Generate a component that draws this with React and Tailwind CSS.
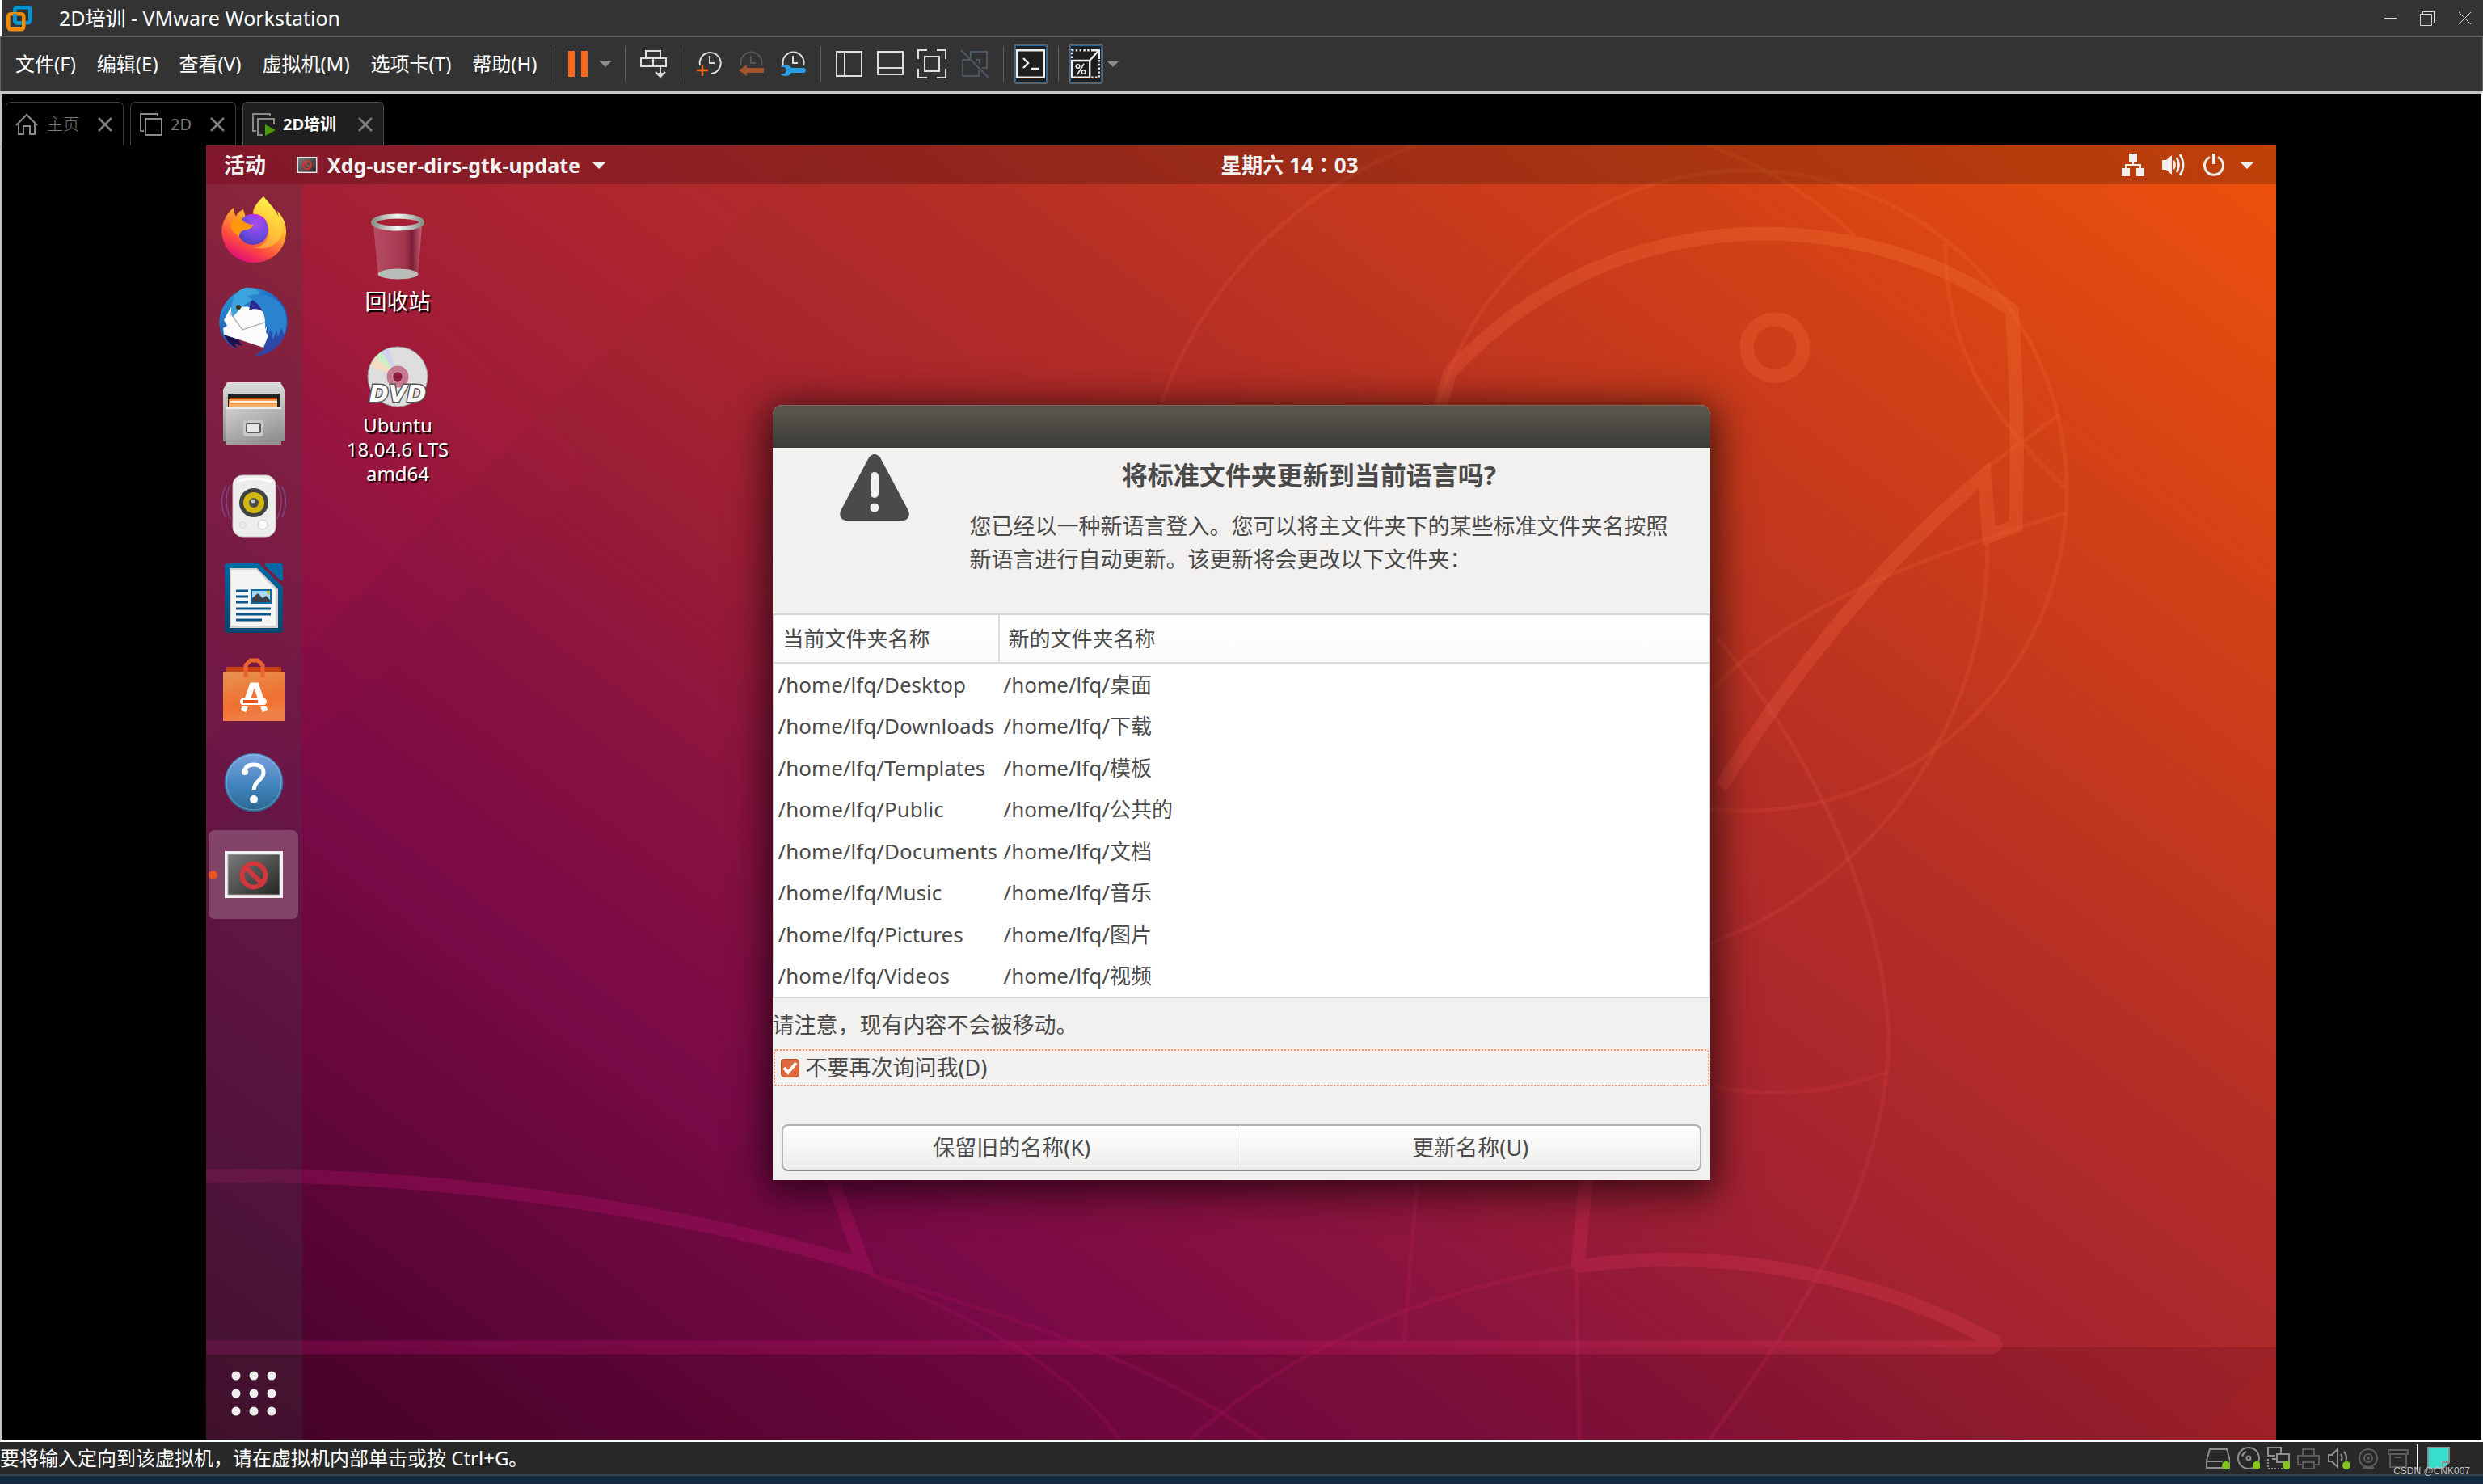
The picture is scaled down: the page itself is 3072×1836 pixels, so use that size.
import React, { useState } from "react";

const MENUS = ["文件(F)", "编辑(E)", "查看(V)", "虚拟机(M)", "选项卡(T)", "帮助(H)"];

const FOLDERS = [
  ["/home/lfq/Desktop", "/home/lfq/桌面"],
  ["/home/lfq/Downloads", "/home/lfq/下载"],
  ["/home/lfq/Templates", "/home/lfq/模板"],
  ["/home/lfq/Public", "/home/lfq/公共的"],
  ["/home/lfq/Documents", "/home/lfq/文档"],
  ["/home/lfq/Music", "/home/lfq/音乐"],
  ["/home/lfq/Pictures", "/home/lfq/图片"],
  ["/home/lfq/Videos", "/home/lfq/视频"],
];

/* ---------- VMware window chrome ---------- */

const VMwareLogo = () => (
  <svg className="w-8 h-8" viewBox="0 0 32 32" fill="none" strokeWidth="4.6">
    <rect x="10.3" y="2.3" width="19" height="19" rx="3" stroke="#0095d3" />
    <rect x="2.3" y="10.3" width="19" height="19" rx="3" stroke="#f38b00" />
    <path d="M10.3 10v8.500a3 3 0 0 0 3 3h5" stroke="#0095d3" />
  </svg>
);

const TitleBar = () => (
  <header className="flex items-center h-[45px] bg-[#333333] border-l-2 border-white pl-[6px] pr-3">
    <VMwareLogo />
    <h1 className="ml-[33px] text-[25px] text-white whitespace-nowrap">
      2D培训 - VMware Workstation
    </h1>
    <div className="flex items-center gap-[26px] ml-auto text-[#d8d8d8]">
      <button aria-label="最小化">
        <svg className="w-5 h-5" viewBox="0 0 20 20" stroke="currentColor">
          <path d="M2 9.500h15" />
        </svg>
      </button>
      <button aria-label="还原">
        <svg className="w-5 h-5" viewBox="0 0 20 20" fill="none" stroke="currentColor">
          <path d="M.5 4.500h14v14H.5zM3.500 4V1.500h14v14H15" />
        </svg>
      </button>
      <button aria-label="关闭">
        <svg className="w-5 h-5" viewBox="0 0 20 20" stroke="currentColor">
          <path d="M2 2l15 15M17 2L2 17" />
        </svg>
      </button>
    </div>
  </header>
);

const Divider = () => <span className="w-px h-11 bg-[#5f5f5f]" />;

const Caret = () => (
  <svg className="w-4 h-2" viewBox="0 0 16 8" fill="#8c8c8c">
    <path d="M0 0h16L8 8z" />
  </svg>
);

const ToolButton = ({ label, children }) => (
  <button aria-label={label} className="flex items-center">
    {children}
  </button>
);

const ClockFace = ({ color }) => (
  <g fill="none" stroke={color} strokeWidth="2">
    <path d="M6 20A13 13 0 1 1 31 20" />
    <path d="M18 8v9h6" />
  </g>
);

const Toolbar = () => (
  <div className="flex items-center h-[67px] bg-[#333333] border border-b-0 border-[#5f5f5f] pl-[18px]">
    <nav className="flex gap-[26px]">
      {MENUS.map((menu) => (
        <button key={menu} className="text-2xl text-white whitespace-nowrap">
          {menu}
        </button>
      ))}
    </nav>

    <div className="flex items-center ml-[15px]">
      <Divider />
      <div className="flex items-center gap-[14px] pl-[22px] pr-4">
        <ToolButton label="挂起">
          <svg className="w-6 h-8" viewBox="0 0 24 32" fill="#ff661a">
            <path d="M0 0h8v32H0zM16 0h8v32h-8z" />
          </svg>
        </ToolButton>
        <ToolButton label="电源选项">
          <Caret />
        </ToolButton>
      </div>
      <Divider />
      <div className="px-[17px]">
        <ToolButton label="发送 Ctrl+Alt+Del">
          <svg className="w-[34px] h-9" viewBox="0 0 34 36" fill="none" stroke="#dedede" strokeWidth="2">
            <path d="M8 11V2h18v9M2 11h31v10H2zM17 11v10M26 21v12M20 28l6 6 6-6" />
            <path d="M21 29h10l-5 5z" fill="#dedede" stroke="none" />
          </svg>
        </ToolButton>
      </div>
      <Divider />
      <div className="flex items-center gap-4 px-4">
        <ToolButton label="拍摄快照">
          <svg className="w-9 h-9" viewBox="0 0 36 36">
            <path d="M7 20A13 13 0 1 1 21 30" fill="none" stroke="#dedede" strokeWidth="2" />
            <path d="M19 8v9h6" fill="none" stroke="#dedede" strokeWidth="2" />
            <path d="M10 19v14M3 26h14" stroke="#ff661a" strokeWidth="2.400" />
          </svg>
        </ToolButton>
        <ToolButton label="恢复快照">
          <svg className="w-9 h-9" viewBox="0 0 36 36">
            <ClockFace color="#555555" />
            <path d="M3 26l10-7v4h21v6H13v4z" fill="#a3532a" />
          </svg>
        </ToolButton>
        <ToolButton label="管理快照">
          <svg className="w-9 h-9" viewBox="0 0 36 36">
            <ClockFace color="#dedede" />
            <path
              d="M4 20c5-2 11 0 12 3h15a3 3 0 0 1 0 6H16c-1 4-7 5-12 3l-1-2h5l2-4-2-4H3z"
              fill="#2b9fe3"
            />
          </svg>
        </ToolButton>
      </div>
      <Divider />
      <div className="flex items-center gap-[17px] px-[17px]">
        <ToolButton label="显示库">
          <svg className="w-[34px] h-9" viewBox="0 0 34 36" fill="none" stroke="#dedede" strokeWidth="2">
            <path d="M2 3h31v30H2zM12 3v30" />
          </svg>
        </ToolButton>
        <ToolButton label="显示缩略图">
          <svg className="w-[34px] h-9" viewBox="0 0 34 36" fill="none" stroke="#dedede" strokeWidth="2">
            <path d="M2 3h31v28H2zM2 23h31" />
          </svg>
        </ToolButton>
        <ToolButton label="全屏">
          <svg className="w-9 h-9" viewBox="0 0 36 36" fill="none" stroke="#dedede" strokeWidth="2">
            <path d="M1 12V1h11M24 1h11v11M35 24v11H24M12 35H1V24M9 9h18v18H9z" />
          </svg>
        </ToolButton>
        <ToolButton label="Unity 模式">
          <svg className="w-9 h-9" viewBox="0 0 36 36" fill="none" stroke="#4a5965" strokeWidth="2">
            <path d="M13 11V3h20v20h-6M12 13H3v20h20v-7M20 13h4v5M1 1l34 34" />
          </svg>
        </ToolButton>
      </div>
      <Divider />
      <div className="px-3">
        <ToolButton label="控制台">
          <span className="grid place-items-center w-[43px] h-[50px] rounded border-2 border-[#5e6468] bg-[#1f1f1f] ring-1 ring-inset ring-[#1c6cb0]">
            <svg className="w-9 h-9" viewBox="0 0 36 36" fill="none" stroke="#eeeeee" strokeWidth="2.400">
              <path d="M1.200 1.200h33.600v33.600H1.200z" />
              <path d="M9 11l6 6-6 6M18 24h10" />
            </svg>
          </span>
        </ToolButton>
      </div>
      <Divider />
      <div className="flex items-center gap-1 pl-3">
        <ToolButton label="拉伸客户机">
          <span className="grid place-items-center w-[43px] h-[50px] rounded border-2 border-[#5e6468] bg-[#1f1f1f] ring-1 ring-inset ring-[#1c6cb0]">
            <svg className="w-9 h-9" viewBox="0 0 36 36" fill="none" stroke="#eeeeee" strokeWidth="2.400">
              <path d="M1.200 14h22v20.800h-22zM23 14L34 2M25 1.200h9.800V12" />
              <path d="M1.200 11V1.200H24M34.800 13v21.600H24" strokeDasharray="2.400 2.400" />
              <g strokeWidth="1.600">
                <path d="M16 18L8 31" />
                <circle cx="8.500" cy="21" r="2.300" />
                <circle cx="15.500" cy="28" r="2.300" />
              </g>
            </svg>
          </span>
        </ToolButton>
        <ToolButton label="拉伸选项">
          <Caret />
        </ToolButton>
      </div>
    </div>
  </div>
);

const CloseTab = ({ label }) => (
  <button aria-label={`关闭 ${label}`}>
    <svg className="w-[18px] h-[18px]" viewBox="0 0 18 18" stroke="#7c7c7c" strokeWidth="2.600">
      <path d="M1 1l16 16M17 1L1 17" />
    </svg>
  </button>
);

const TabStrip = () => (
  <div className="flex items-end gap-2 h-16 pl-[5px] text-xl">
    <div className="flex items-center h-[54px] w-[146px] pl-[11px] pr-[13px] rounded-t-md border border-b-0 border-[#3a3a3a] text-[#777777]">
      <svg className="w-7 h-7" viewBox="0 0 28 28" fill="none" stroke="#8a8a8a" strokeWidth="2">
        <path d="M1 15L14 2l13 13M4 13v13h6v-10h8v10h6V13" />
      </svg>
      <span className="ml-[11px] font-light whitespace-nowrap">主页</span>
      <span className="flex ml-auto">
        <CloseTab label="主页" />
      </span>
    </div>
    <div className="flex items-center h-[54px] w-[131px] pl-[11px] pr-[13px] rounded-t-md border border-b-0 border-[#3a3a3a] text-[#777777]">
      <svg className="w-7 h-7" viewBox="0 0 28 28" fill="none" stroke="#8a8a8a" strokeWidth="2">
        <path d="M5 22H1V1h21v3M7 7h20v20H7z" />
      </svg>
      <span className="ml-[10px]">2D</span>
      <span className="flex ml-auto">
        <CloseTab label="2D" />
      </span>
    </div>
    <div className="flex items-center h-[54px] w-[175px] pl-[11px] pr-[13px] rounded-t-md border border-b-0 border-[#4a4a4a] bg-[#1f1f1f] text-white">
      <svg className="w-7 h-7" viewBox="0 0 28 28" fill="none" stroke="#8a8a8a" strokeWidth="2">
        <path d="M5 22H1V1h21v3M13 27H7V7h20v7" />
        <path d="M16 14l13 7-13 7z" fill="#4e9a06" stroke="none" />
      </svg>
      <span className="ml-[10px] font-bold whitespace-nowrap">2D培训</span>
      <span className="flex ml-auto">
        <CloseTab label="2D培训" />
      </span>
    </div>
  </div>
);

/* ---------- Ubuntu desktop ---------- */

const Wallpaper = () => (
  <svg
    className="absolute inset-0 w-full h-full"
    viewBox="0 0 2561 1601"
    preserveAspectRatio="none"
    fill="none"
    aria-hidden="true"
  >
    <defs>
      <linearGradient id="sky" x1="0" y1="1" x2="1.073" y2="0.086">
        <stop offset="0" stopColor="#420328" />
        <stop offset="0.12" stopColor="#5c0538" />
        <stop offset="0.26" stopColor="#7a0a47" />
        <stop offset="0.38" stopColor="#8c143e" />
        <stop offset="0.5" stopColor="#a42330" />
        <stop offset="0.65" stopColor="#b62f24" />
        <stop offset="0.82" stopColor="#d04017" />
        <stop offset="1" stopColor="#ef510b" />
      </linearGradient>
      {/* same slope as the sky, in canvas units so every line shares it */}
      <linearGradient id="outline" x1="0" y1="1601" x2="1660" y2="-661" gradientUnits="userSpaceOnUse">
        <stop offset="0.05" stopColor="#a00c62" />
        <stop offset="0.3" stopColor="#b8125e" />
        <stop offset="0.5" stopColor="#d43648" />
        <stop offset="0.7" stopColor="#e8583a" />
        <stop offset="1" stopColor="#f57a25" />
      </linearGradient>
    </defs>
    <path d="M0 0h2561v1601H0z" fill="url(#sky)" />

    {/* paper folds */}
    <path d="M0 742L754 0H0z" fill="#ff2050" fillOpacity="0.06" />
    <path d="M100 30L480 400 0 860V0z" fill="#ff2060" fillOpacity="0.03" />
    <path d="M0 1487h2561v114H0z" fill="#400010" fillOpacity="0.16" />
    <path d="M2561 1487v114h-100z" fill="#ff3000" fillOpacity="0.05" />

    {/* construction circles */}
    <g stroke="url(#outline)" strokeOpacity="0.22" strokeWidth="5">
      <circle cx="1906" cy="427" r="396" />
      <path d="M2204 492A526 526 0 1 1 2040 112" />
      <path d="M2152 121C2150 240 2200 330 2300 423M2293 333L2205 397" />
      <path d="M2300 455C2120 510 1960 570 1865 672" />
      <path d="M1870 609C1960 720 2070 900 2082 1100C2080 1300 1960 1460 1860 1601" />
      <path d="M1865 1164C1940 1180 2020 1170 2080 1146" />
      <path d="M1695 1390L1699 1601M1498 1286L1482 1479" />
      <path d="M1688 1387C1500 1420 1340 1490 1217 1601" />
      <path d="M821 1397C1000 1450 1160 1500 1308 1601M821 1397C1000 1470 1090 1540 1130 1601" />
    </g>

    {/* beaver */}
    <g stroke="url(#outline)" strokeOpacity="0.36" strokeWidth="17">
      <path d="M1525 330L1539 281C1640 170 1780 109 1933 109C2060 112 2160 150 2234 204Q2243 330 2239 471L2206 483L2200 408C2080 510 1970 640 1874 794" />
      <circle cx="1941" cy="250" r="35" />
      <path d="M1708 1270L1697 1387C1880 1360 2070 1400 2214 1481L2212 1487H0" strokeLinejoin="bevel" />
      <path d="M0 1275C260 1270 560 1310 814 1386L771 1270" />
    </g>
  </svg>
);

const FirefoxIcon = () => (
  <svg className="w-20 h-[82px]" viewBox="0 0 80 82">
    <defs>
      <linearGradient id="ffx" x1="0.75" y1="0.1" x2="0.3" y2="1">
        <stop offset="0" stopColor="#fff44f" />
        <stop offset="0.35" stopColor="#ffa930" />
        <stop offset="0.7" stopColor="#ff4f3e" />
        <stop offset="1" stopColor="#e0067c" />
      </linearGradient>
      <radialGradient id="ffxGlobe" cx="0.6" cy="0.3" r="0.8">
        <stop offset="0" stopColor="#a84bf0" />
        <stop offset="0.6" stopColor="#6a4ae0" />
        <stop offset="1" stopColor="#4a3aa8" />
      </radialGradient>
    </defs>
    <path
      d="M16 13C5 22-2 36 1 50c4 20 21 32 39 32 22 0 40-16 40-38 0-12-5-20-11-26l2 8C66 14 58 8 52 0c-8 8-13 14-13 24l-9 2-3-10c-5 3-8 5-9 9-2-3-3-8-2-12z"
      fill="url(#ffx)"
    />
    <circle cx="39" cy="41" r="19" fill="url(#ffxGlobe)" />
    <path d="M30 24c8-4 20-3 26 7-4-2-5-2-6-1-5-5-12-7-20-6z" fill="#b833e1" />
    <path d="M52 0c-8 8-14 14-13 21 11 0 20 8 20 22 0 12-8 20-20 20 14 4 28-1 34-12 4-9 3-17-2-25C66 14 58 8 52 0z" fill="#ffe03d" fillOpacity="0.5" />
    <path d="M11 36c2-8 7-11 13-9 4 6 10 8 16 8-2 5-8 6-13 7-3 1-5 4-5 8-4-4-11-7-11-14z" fill="#ff980e" />
  </svg>
);

const ThunderbirdIcon = () => (
  <svg className="w-[86px] h-[86px]" viewBox="0 0 86 86">
    <defs>
      <linearGradient id="tb" x1="0.2" y1="0" x2="0.8" y2="1">
        <stop offset="0" stopColor="#2b9be0" />
        <stop offset="0.45" stopColor="#1f5fb8" />
        <stop offset="1" stopColor="#3340a0" />
      </linearGradient>
    </defs>
    {/* bird body, envelope, then head and wing over it */}
    <path
      d="M36 1C22 4 10 14 4 27-1 38-1 50 4 60c4 8 9 13 18 17l-3-7 10 3-10-10 36 8v6l-10 8c22 0 40-19 40-43C85 20 64 0 36 1z"
      fill="url(#tb)"
    />
    <path d="M6 58c3 9 9 15 16 18l-3-6 10 3-6-9z" fill="#20104f" />
    <path d="M14 26c16-4 32 0 43 4l3 14-2 12 3 4-6 15L6 59l-1-8 5-3-4-7z" fill="#fbfbfb" />
    <path d="M13 31l16 22 30-10" fill="none" stroke="#b5b5b5" strokeWidth="1.400" />
    <path d="M37 29c6-3 14-2 21 4-2-8-8-15-18-18z" fill="#2a2a8c" />
    <path d="M17 17C20 6 30-1 38 1c6 1 10 3 12 6-4 8-14 12-22 18-4 4-8 9-11 12l-2-6c0-5 0-9 2-14z" fill="#3ba4dc" />
    <path
      d="M34 12c14-6 32-3 42 9 8 10 10 24 5 38l-4-8-4 11-2-9-4 12-3-12-4 8v-14l-3 5C58 38 56 22 34 12z"
      fill="#2a83cf"
    />
    <circle cx="24" cy="25" r="3" fill="#3d3320" />
  </svg>
);

const FilesIcon = () => (
  <svg className="w-[76px] h-20" viewBox="0 0 76 80">
    <defs>
      <linearGradient id="cab" x1="0" y1="0" x2="0" y2="1">
        <stop offset="0" stopColor="#dcdcda" />
        <stop offset="1" stopColor="#8d8d8b" />
      </linearGradient>
      <linearGradient id="drawer" x1="0" y1="0" x2="0.6" y2="1">
        <stop offset="0" stopColor="#cfcfcd" />
        <stop offset="1" stopColor="#939391" />
      </linearGradient>
    </defs>
    <path d="M5 1h66l5 9v64H0V10z" fill="url(#cab)" />
    <path d="M6 15h64v20H6z" fill="#222" />
    <path d="M9 20h58v12H9z" fill="#c8460e" />
    <path d="M7 22h60v10H7z" fill="#f08b3a" />
    <path d="M9 25h58" stroke="#fff1dc" strokeWidth="2.500" />
    <path d="M7 28h60v5H7z" fill="#f3ae66" />
    <path d="M3 33h69v45H3z" fill="url(#drawer)" />
    <path d="M3 33h69" stroke="#ececec" strokeWidth="2" />
    <rect x="25" y="48" width="25" height="20" rx="4" fill="#c9c9c7" />
    <rect x="29" y="52" width="17" height="11" rx="1" fill="#e8e8e8" stroke="#5b5b5b" strokeWidth="2" />
  </svg>
);

const RhythmboxIcon = () => (
  <svg className="w-[86px] h-20" viewBox="0 0 86 80">
    <g fill="none" stroke="#6f6fb8" strokeOpacity="0.55" strokeWidth="1.500">
      <path d="M14 14q-10 18 0 42M8 16q-9 18 0 38M72 14q10 18 0 42M78 16q9 18 0 38" />
    </g>
    <rect x="17" y="2" width="53" height="76" rx="12" fill="#ededeb" stroke="#c9c9c6" />
    <path d="M22 10q21-8 43 0" stroke="#fff" strokeWidth="3" fill="none" />
    <circle cx="43" cy="36" r="18" fill="#3f4442" />
    <circle cx="43" cy="36" r="13" fill="#d3b60e" />
    <circle cx="43" cy="36" r="6" fill="#4b4b4b" />
    <circle cx="42" cy="34" r="2.500" fill="#c9c9c9" />
    <circle cx="54" cy="63" r="6" fill="#fafafa" stroke="#c9c9c6" />
    <rect x="26" y="60" width="7" height="7" rx="2" fill="none" stroke="#d4d4d0" />
  </svg>
);

const WriterIcon = () => (
  <svg className="w-[72px] h-[86px]" viewBox="0 0 72 86">
    <defs>
      <linearGradient id="lo" x1="0" y1="0" x2="0" y2="1">
        <stop offset="0" stopColor="#0069a6" />
        <stop offset="1" stopColor="#07456b" />
      </linearGradient>
    </defs>
    <path d="M4 0h38l30 29v53q0 4-4 4H4q-4 0-4-4V4q0-4 4-4z" fill="url(#lo)" />
    <path d="M50 0h18q4 0 4 4v17h-3L50 3z" fill="#0069a6" />
    <path d="M6 6h34l26 26v48H6z" fill="#d3d3d3" />
    <path d="M8 8h31l24 25v44H8z" fill="#f5f5f5" />
    <path d="M14 34h15M14 41h15M14 48h15M14 56h43M14 63h43M14 70h32" stroke="#0a5688" strokeWidth="3.200" />
    <path d="M32 32h26v18H32z" fill="#0b6ba3" />
    <path d="M34 34h22v14H34z" fill="#a9d9f5" />
    <path d="M34 48v-5l7-6 6 6 4-3 5 5v3z" fill="#3c4246" />
    <path d="M50 34h6v6z" fill="#e2c33b" />
  </svg>
);

const SoftwareIcon = () => (
  <svg className="w-[76px] h-20" viewBox="0 0 76 80">
    <defs>
      <linearGradient id="bag" x1="0" y1="0" x2="0.3" y2="1">
        <stop offset="0" stopColor="#e79353" />
        <stop offset="0.7" stopColor="#f0702f" />
        <stop offset="1" stopColor="#f08048" />
      </linearGradient>
    </defs>
    <path d="M4 11h68v9H4z" fill="#c8430f" />
    <path d="M0 17h76v61H0z" fill="url(#bag)" />
    <path d="M28 24V9l6-6h9l6 6v15" fill="none" stroke="#ea6330" strokeWidth="5" />
    <path d="M25 66l11-32h5l11 32" fill="none" stroke="#fff" strokeWidth="7" />
    <path d="M16 56h44v4H16z" fill="#f0702f" />
    <rect x="21" y="50" width="33" height="8" rx="4" fill="#fff" />
    <path d="M25 54h18" stroke="#e8511a" strokeWidth="4" />
  </svg>
);

const HelpIcon = () => (
  <svg className="w-[74px] h-[74px]" viewBox="0 0 74 74">
    <defs>
      <linearGradient id="help" x1="0" y1="0" x2="0" y2="1">
        <stop offset="0" stopColor="#7ba3e0" />
        <stop offset="0.6" stopColor="#3e80b8" />
        <stop offset="1" stopColor="#2b678f" />
      </linearGradient>
    </defs>
    <circle cx="37" cy="37" r="36" fill="url(#help)" stroke="#2f6ca0" />
    <circle cx="37" cy="37" r="34" fill="none" stroke="#a9c8ee" strokeOpacity="0.5" />
    <path
      d="M26 24c0-7 5-9 11-9 8 0 12 4 12 10 0 9-12 10-12 22"
      fill="none"
      stroke="#fff"
      strokeWidth="5"
    />
    <circle cx="26" cy="24" r="4" fill="#fff" />
    <circle cx="37" cy="58" r="5" fill="#fff" />
  </svg>
);

const BlockedIcon = ({ className }) => (
  <svg className={className} viewBox="0 0 72 58">
    <defs>
      <linearGradient id="screen" x1="0" y1="0" x2="1" y2="1">
        <stop offset="0" stopColor="#7b7b7b" />
        <stop offset="1" stopColor="#262626" />
      </linearGradient>
    </defs>
    <path d="M0 0h72v58H0z" fill="#f0f0f0" />
    <path d="M4 4h64v50H4z" fill="url(#screen)" stroke="#a8a8a8" />
    <g fill="none" stroke="#d0383c" strokeWidth="6">
      <circle cx="36" cy="30" r="14.500" />
      <path d="M26 20l20 20" />
    </g>
  </svg>
);

const DOCK = [
  { name: "Firefox", icon: <FirefoxIcon /> },
  { name: "Thunderbird", icon: <ThunderbirdIcon /> },
  { name: "文件", icon: <FilesIcon /> },
  { name: "Rhythmbox", icon: <RhythmboxIcon /> },
  { name: "LibreOffice Writer", icon: <WriterIcon /> },
  { name: "Ubuntu 软件", icon: <SoftwareIcon /> },
  { name: "帮助", icon: <HelpIcon /> },
];

const Dock = () => (
  <aside className="relative flex flex-col gap-1 w-[119px] pt-px pl-[3px] pr-[5px] bg-[#3c4046]/25">
    {DOCK.map((app) => (
      <button key={app.name} aria-label={app.name} className="grid place-items-center h-[110px]">
        {app.icon}
      </button>
    ))}
    <button
      aria-label="Xdg-user-dirs-gtk-update"
      className="flex items-center h-[110px] rounded-lg bg-white/20"
    >
      <span className="w-[11px] h-[11px] rounded-full bg-[#e95420]" />
      <BlockedIcon className="w-[72px] h-[58px] ml-[9px]" />
    </button>
    <button aria-label="显示应用程序" className="mt-auto mb-[29px] mx-auto">
      <svg className="w-14 h-14" viewBox="0 0 56 56" fill="#eeeeec">
        {[6, 28, 50].map((y) =>
          [6, 28, 50].map((x) => <circle key={x + y * 100} cx={x} cy={y} r="5.500" />)
        )}
      </svg>
    </button>
  </aside>
);

const TopBar = () => (
  <div className="relative grid grid-cols-3 items-center h-12 bg-black/20 text-[26px] leading-8 font-bold text-[#f2f2f2] text-shadow-2xs">
    <div className="flex items-center pl-[22px]">
      <button className="whitespace-nowrap">活动</button>
      <button className="flex items-center ml-[38px] whitespace-nowrap">
        <BlockedIcon className="w-[26px] h-5 mr-3" />
        <span className="text-[25px]">Xdg-user-dirs-gtk-update</span>
        <svg className="w-[18px] h-[9px] ml-[14px]" viewBox="0 0 18 9" fill="#eeeeec">
          <path d="M0 0h18L9 9z" />
        </svg>
      </button>
    </div>
    <button className="justify-self-center ml-[120px] whitespace-nowrap font-['Noto_Sans','Noto_Sans_CJK_TC',sans-serif]">
      星期六 14：03
    </button>
    <button aria-label="系统菜单" className="flex items-center justify-self-end gap-[22px] pr-[27px]">
      <svg className="w-7 h-7" viewBox="0 0 28 28" fill="#eeeeec">
        <path d="M9 0h10v10H9zM0 18h10v10H0zM18 18h10v10H18z" />
        <path d="M14 9v6M5 19v-5h18v5" fill="none" stroke="#eeeeec" strokeWidth="2" />
      </svg>
      <svg className="w-7 h-7" viewBox="0 0 28 28" fill="#eeeeec">
        <path d="M0 8h5l7-6v24l-7-6H0z" />
        <path d="M14 9q3 5 0 10M18 5q5 9 0 18M22 1q8 13 0 26" fill="none" stroke="#eeeeec" strokeWidth="2.800" />
      </svg>
      <svg className="w-7 h-7" viewBox="0 0 28 28" fill="none" stroke="#eeeeec" strokeWidth="3">
        <path d="M9 4.500a11.500 11.500 0 1 0 10 0" />
        <path d="M14 0v13" strokeWidth="4" />
      </svg>
      <svg className="w-[18px] h-[9px] -ml-1" viewBox="0 0 18 9" fill="#eeeeec">
        <path d="M0 0h18L9 9z" />
      </svg>
    </button>
  </div>
);

const DesktopIcons = () => (
  <div className="flex flex-col items-center w-[236px] pt-9 text-[27px] text-white text-center">
    <figure className="flex flex-col items-center">
      <svg className="w-[66px] h-[84px]" viewBox="0 0 66 84">
        <defs>
          <linearGradient id="glass" x1="0" y1="0" x2="1" y2="0">
            <stop offset="0" stopColor="#c0607a" stopOpacity="0.7" />
            <stop offset="0.65" stopColor="#a04058" stopOpacity="0.7" />
            <stop offset="0.8" stopColor="#6e1c34" stopOpacity="0.8" />
            <stop offset="1" stopColor="#d07088" stopOpacity="0.8" />
          </linearGradient>
          <linearGradient id="rim" x1="0" y1="0" x2="1" y2="0">
            <stop offset="0" stopColor="#8d908b" />
            <stop offset="0.5" stopColor="#f6f6f5" />
            <stop offset="1" stopColor="#8d908b" />
          </linearGradient>
        </defs>
        <path d="M3 16h60l-5 61q-25 8-49 0z" fill="url(#glass)" />
        <ellipse cx="33.500" cy="75" rx="25" ry="6.500" fill="#b9bdb9" />
        <ellipse cx="33" cy="11" rx="30" ry="7.500" fill="none" stroke="url(#rim)" strokeWidth="6" />
      </svg>
      <figcaption className="mt-[5px] leading-10 text-shadow-[2px_2px_1px_#000000]">回收站</figcaption>
    </figure>
    <figure className="flex flex-col items-center mt-[35px]">
      <svg className="w-[76px] h-[76px]" viewBox="0 0 76 76">
        <circle cx="38" cy="38" r="37" fill="#dedede" stroke="#9c9c9c" />
        <path d="M38 38L4 24l6-10z" fill="#f5dcc0" />
        <path d="M38 38L10 14l8-7z" fill="#cdeec6" />
        <path d="M38 38L18 7l9-4z" fill="#d0d0f2" />
        <path d="M38 38l34 16-10 12z" fill="#f2e2da" />
        <circle cx="38" cy="38" r="10" fill="none" stroke="#c5798e" strokeWidth="7" />
        <circle cx="38" cy="38" r="6" fill="#8f1a3c" />
        <text
          x="38"
          y="69"
          textAnchor="middle"
          fontFamily="DejaVu Sans"
          fontWeight="bold"
          fontStyle="italic"
          fontSize="29"
          fill="#fff"
          stroke="#555"
          strokeWidth="3"
          paintOrder="stroke"
        >
          DVD
        </text>
      </svg>
      <figcaption className="mt-[7px] text-2xl leading-[30px] text-shadow-[2px_2px_1px_#000000]">
        Ubuntu
        <br />
        18.04.6 LTS
        <br />
        amd64
      </figcaption>
    </figure>
  </div>
);

const UpdateDialog = () => {
  const [dontAsk, setDontAsk] = useState(true);

  return (
    <section
      role="dialog"
      aria-labelledby="dialog-title"
      className="w-[1160px] rounded-t-xl overflow-hidden bg-[#f2f1ef] text-[27px] text-[#4a4a4a] shadow-[0_8px_48px_8px_rgba(0,0,0,0.65)]"
    >
      <div className="h-[53px] bg-linear-to-b from-[#5c5a50] to-[#3d3b37] border-t border-[#6b6960]" />

      <div className="flex items-start h-[205px] pl-[83px]">
        <svg className="w-[86px] h-[82px] mt-[8px]" viewBox="0 0 86 82">
          <path d="M36 4q7-8 14 0l35 66q3 10-6 12H7q-9-2-6-12z" fill="#4a4a4a" />
          <path d="M43 27v22" stroke="#f2f1ef" strokeWidth="10" strokeLinecap="round" />
          <circle cx="43" cy="66" r="5.500" fill="#f2f1ef" />
        </svg>
        <div className="ml-[75px] pt-[14px]">
          <h2 id="dialog-title" className="pr-6 text-[32px] leading-10 font-bold text-center">
            将标准文件夹更新到当前语言吗?
          </h2>
          <p className="mt-[22px] leading-[41px] whitespace-nowrap">
            您已经以一种新语言登入。您可以将主文件夹下的某些标准文件夹名按照
            <br />
            新语言进行自动更新。该更新将会更改以下文件夹：
          </p>
        </div>
      </div>

      <table className="w-full h-[476px] bg-white border-2 border-x border-[#d5d3d1] border-separate border-spacing-0 text-left text-[26px]">
        <thead>
          <tr className="h-[60px] bg-linear-to-b from-white to-[#fafafa]">
            <th className="w-[280px] pl-[12px] font-normal border-b-2 border-r-2 border-[#e0dfdd]">
              当前文件夹名称
            </th>
            <th className="pl-[11px] font-normal border-b-2 border-[#e0dfdd]">新的文件夹名称</th>
          </tr>
        </thead>
        <tbody>
          {FOLDERS.map(([from, to]) => (
            <tr key={from}>
              <td className="pl-[6px] leading-8 whitespace-nowrap">{from}</td>
              <td className="pl-[5px] leading-8">{to}</td>
            </tr>
          ))}
        </tbody>
      </table>

      <p className="pt-[13px] leading-10">请注意，现有内容不会被移动。</p>

      <label className="flex items-center h-[46px] mt-[10px] mx-px pl-[7px] border-2 border-dotted border-[#f0936c] rounded">
        <span className="grid">
          <input
            type="checkbox"
            checked={dontAsk}
            onChange={(e) => setDontAsk(e.target.checked)}
            className="peer col-start-1 row-start-1 appearance-none w-[23px] h-[23px] rounded border border-[#b5502c] bg-[#dc6a3e]"
          />
          <svg
            className="col-start-1 row-start-1 w-[23px] h-[23px] invisible peer-checked:visible pointer-events-none"
            viewBox="0 0 23 23"
            fill="none"
            stroke="#fff"
            strokeWidth="4"
          >
            <path d="M4 11l5 6L19 5" />
          </svg>
        </span>
        <span className="ml-2">不要再次询问我(D)</span>
      </label>

      <div className="flex h-[58px] mx-[11px] mt-[47px] mb-[11px] rounded-lg border-2 border-[#b3b2b0] border-b-[#8f8e8c] bg-linear-to-b from-white to-[#ececea]">
        <button className="flex-1 border-r border-[#c8c7c5]">保留旧的名称(K)</button>
        <button className="flex-1">更新名称(U)</button>
      </div>
    </section>
  );
};

/* ---------- Status bar ---------- */

const ActiveDot = () => <circle cx="24" cy="23" r="5" fill="#84c71c" stroke="none" />;

const StatusBar = () => (
  <footer className="relative flex items-center h-[40px] bg-[#282828] pr-[41px] text-2xl text-white">
    <p className="whitespace-nowrap">要将输入定向到该虚拟机，请在虚拟机内部单击或按 Ctrl+G。</p>
    <div className="flex items-center gap-[9px] ml-auto">
      <svg className="w-[30px] h-7" viewBox="0 0 30 28" fill="none" stroke="#8f8f8f" strokeWidth="2">
        <path d="M5 3h21l4 14v9H1v-9zM1 18h20" />
        <circle cx="25" cy="23" r="5" fill="#84c71c" stroke="none" />
      </svg>
      <svg className="w-7 h-7" viewBox="0 0 28 28" fill="none" stroke="#8f8f8f" strokeWidth="2">
        <circle cx="14" cy="14" r="13" />
        <circle cx="14" cy="14" r="2.500" />
        <path d="M6 12q1-4 5-6" />
        <ActiveDot />
      </svg>
      <svg className="w-7 h-7" viewBox="0 0 28 28" fill="none" stroke="#8f8f8f" strokeWidth="2">
        <path d="M10 11H1V1h16v7M12 9h15v10H12zM6 15h5" />
        <path d="M1 15v12h18" strokeDasharray="2 2" />
        <ActiveDot />
      </svg>
      <svg className="w-7 h-7" viewBox="0 0 28 28" fill="none" stroke="#5c5c5c" strokeWidth="2">
        <path d="M7 10V3h14v7M6 22H1V11h26v11h-5M7 19h14v8H7z" />
      </svg>
      <svg className="w-7 h-7" viewBox="0 0 28 28" fill="none" stroke="#8f8f8f" strokeWidth="2">
        <path d="M2 10h4l7-7v22l-7-7H2zM17 9q3 5 0 8M21 6q5 6 2 12" />
        <ActiveDot />
      </svg>
      <svg className="w-7 h-7" viewBox="0 0 28 28" fill="none" stroke="#5c5c5c" strokeWidth="2">
        <circle cx="14" cy="14" r="11" />
        <circle cx="14" cy="14" r="5" />
        <circle cx="14" cy="14" r="1" />
        <path d="M7 26h14" />
      </svg>
      <svg className="w-7 h-7" viewBox="0 0 28 28" fill="none" stroke="#5c5c5c" strokeWidth="2">
        <path d="M2 4h24v5H2zM4 9v16h20V9M10 13h8" />
      </svg>
      <span className="w-[2px] h-[34px] bg-white" />
      <svg className="w-7 h-7 ml-[2px]" viewBox="0 0 28 28" stroke="#8f8f8f" strokeWidth="2">
        <path d="M1 1h26v18l-8 8H1z" fill="#36e0cc" />
        <path d="M19 27v-8h8" fill="#36e0cc" />
      </svg>
    </div>
    <span className="absolute right-4 -bottom-1 font-['Liberation_Sans'] text-xs text-[#c4c4c4] text-shadow-2xs">
      CSDN @CNK007
    </span>
  </footer>
);

const App = () => (
  <div className="flex flex-col min-h-screen bg-black font-['Noto_Sans','Noto_Sans_CJK_SC',sans-serif]">
    <TitleBar />
    <Toolbar />
    <main className="flex flex-col flex-1 border-2 border-t-4 border-b-[3px] border-[#c4c4c4] border-b-white border-r-white">
      <TabStrip />
      <div className="relative flex flex-col flex-1 ml-[253px] mr-[254px]">
        <Wallpaper />
        <TopBar />
        <div className="relative flex flex-1">
          <Dock />
          <DesktopIcons />
        </div>
        <div className="absolute inset-0 grid place-items-center">
          <UpdateDialog />
        </div>
      </div>
    </main>
    <StatusBar />
    <div className="h-3 bg-[#12293f] border-t-2 border-[#36444f]" />
  </div>
);

export default App;
